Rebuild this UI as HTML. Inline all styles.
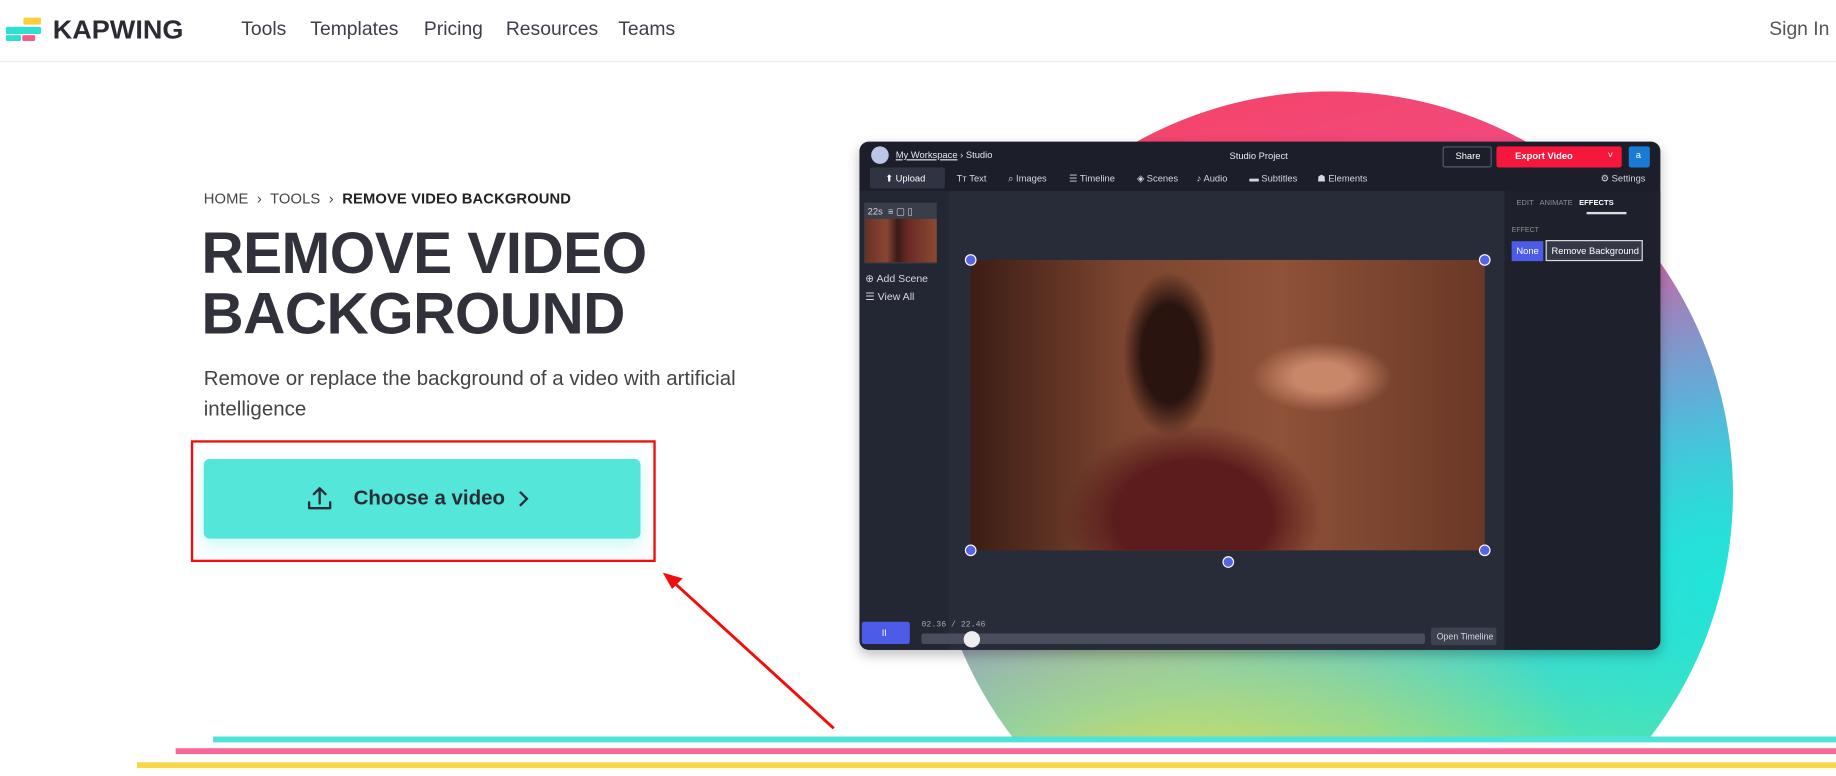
<!DOCTYPE html>
<html><head><meta charset="utf-8"><style>
*{margin:0;padding:0;box-sizing:border-box}
html,body{width:1836px;height:776px;overflow:hidden;background:#fff;font-family:"Liberation Sans",sans-serif}
#w{position:absolute;left:0;top:0;width:1568px;height:662px;overflow:hidden;transform:scale(1.17092);transform-origin:0 0}
.a{position:absolute}
.nav{font-size:16.5px;color:#3c3f48;top:16px}
.st{color:#d6d8de;font-size:8px;position:absolute;white-space:nowrap}
</style></head><body><div id="w">
<!-- header -->
<div class="a" style="left:20px;top:15px;width:15px;height:6px;background:#fdd03b;border-radius:1px"></div>
<div class="a" style="left:5px;top:23px;width:30px;height:6px;background:#2ee0d4;border-radius:1px"></div>
<div class="a" style="left:5px;top:30px;width:13px;height:5px;background:#2ee0d4;border-radius:1px"></div>
<div class="a" style="left:19px;top:30px;width:11px;height:5px;background:#fb5b8c;border-radius:1px"></div>
<div class="a" style="left:45px;top:13px;font-size:22px;font-weight:900;color:#2a2b33;transform:scaleX(1.05);transform-origin:0 0">KAPWING</div>
<div class="a nav" style="left:206px">Tools</div>
<div class="a nav" style="left:265px">Templates</div>
<div class="a nav" style="left:362px">Pricing</div>
<div class="a nav" style="left:432px">Resources</div>
<div class="a nav" style="left:528px">Teams</div>
<div class="a nav" style="left:1511px;color:#555">Sign In</div>
<div class="a" style="left:0;top:52px;width:1568px;height:1px;background:#eee"></div>
<!-- left -->
<div class="a" style="left:174px;top:163px;font-size:12.6px;color:#444;letter-spacing:0.1px">HOME &nbsp;›&nbsp; TOOLS &nbsp;›&nbsp; <b style="color:#222">REMOVE VIDEO BACKGROUND</b></div>
<div class="a" style="left:172px;top:190px;font-size:50px;font-weight:900;line-height:52px;color:#30313b;letter-spacing:-0.5px">REMOVE VIDEO<br>BACKGROUND</div>
<div class="a" style="left:174px;top:310px;font-size:17.5px;line-height:26px;color:#444;width:500px">Remove or replace the background of a video with artificial intelligence</div>
<div class="a" style="left:174px;top:392px;width:373px;height:68px;background:#55e6da;border-radius:5px;box-shadow:0 6px 14px rgba(85,230,218,.3)"></div>
<svg class="a" style="left:261px;top:414px" width="24" height="24" viewBox="0 0 24 24" fill="none" stroke="#2b2d36" stroke-width="2" stroke-linecap="round" stroke-linejoin="round"><path d="M3 15v5h18v-5M12 16V3M7 8l5-5 5 5"/></svg>
<div class="a" style="left:302px;top:415px;font-size:17.5px;font-weight:bold;color:#2b2d36">Choose a video</div>
<svg class="a" style="left:441px;top:419px" width="12" height="14" viewBox="0 0 12 14" fill="none" stroke="#2b2d36" stroke-width="2"><path d="M3 1l6 6-6 6"/></svg>
<div class="a" style="left:163px;top:376px;width:397px;height:104px;border:2.5px solid #f20c0c"></div>
<svg class="a" style="left:0;top:0" width="1568" height="662"><line x1="712" y1="622" x2="575" y2="497" stroke="#f20c0c" stroke-width="2.5"/><path d="M566 489l17 5-9 9z" fill="#f20c0c"/></svg>
<!-- circle -->
<div class="a" style="left:700px;top:60px;width:868px;height:573px;overflow:hidden">
<div class="a" style="left:94px;top:18px;width:686px;height:686px;border-radius:50%;background:
radial-gradient(circle at 30% 100%,#f3e04a 0%,rgba(243,224,74,0) 45%),
radial-gradient(circle at 98% 62%,#22e4d8 0%,rgba(34,228,216,0) 40%),
linear-gradient(165deg,#f7405f 0%,#ee4f8c 30%,#9c7bd8 50%,#40c6e6 65%,#6ee09a 80%,#f0df4e 100%)"></div></div>
<!-- lines -->
<div class="a" style="left:182px;top:629px;width:1386px;height:5px;background:#4ee3d8"></div>
<div class="a" style="left:150px;top:639px;width:1418px;height:5px;background:#f7679a"></div>
<div class="a" style="left:117px;top:651px;width:1451px;height:5px;background:#f8d648"></div>
<!-- studio -->
<div class="a" style="left:734px;top:121px;width:684px;height:434px;background:#1c1f2a;border-radius:8px;overflow:hidden;box-shadow:0 4px 10px rgba(0,0,0,.25)">
 <div class="a" style="left:76px;top:42px;width:475px;height:392px;background:#282b38"></div>
 <div class="a" style="left:0;top:42px;width:76px;height:392px;background:#232633"></div>
 <div class="a" style="left:551px;top:42px;width:133px;height:392px;background:#1e212c"></div>
 <div class="a" style="left:10px;top:4px;width:15px;height:15px;border-radius:50%;background:#b9c6e8"></div>
 <div class="st" style="left:31px;top:7px;color:#e8e8ee"><u>My Workspace</u> › Studio</div>
 <div class="st" style="left:316px;top:8px;color:#e8e8ee">Studio Project</div>
 <div class="a" style="left:498px;top:4px;width:42px;height:18px;border:1px solid #555b6a;border-radius:2px"></div><div class="st" style="left:509px;top:8px;color:#fff">Share</div>
 <div class="a" style="left:544px;top:4px;width:107px;height:18px;background:#f5173c;border-radius:2px"></div><div class="st" style="left:560px;top:8px;color:#fff;font-weight:bold">Export Video</div><div class="st" style="left:639px;top:7px;color:#fff">˅</div>
 <div class="a" style="left:657px;top:4px;width:18px;height:18px;background:#1b7ad6;border-radius:2px"></div><div class="st" style="left:663px;top:7px;color:#fff">a</div>
 <div class="a" style="left:9px;top:22px;width:64px;height:18px;background:#2f3342;border-radius:2px"></div>
 <div class="st" style="left:22px;top:27px;color:#fff">⬆ Upload</div>
 <div class="st" style="left:83px;top:27px">Tт Text</div>
 <div class="st" style="left:127px;top:27px">⌕ Images</div>
 <div class="st" style="left:179px;top:27px">☰ Timeline</div>
 <div class="st" style="left:237px;top:27px">◈ Scenes</div>
 <div class="st" style="left:288px;top:27px">♪ Audio</div>
 <div class="st" style="left:333px;top:27px">▬ Subtitles</div>
 <div class="st" style="left:391px;top:27px">☗ Elements</div>
 <div class="st" style="left:633px;top:27px">⚙ Settings</div>
 <div class="a" style="left:4px;top:52px;width:62px;height:52px;background:#3a3d4a"></div>
 <div class="st" style="left:7px;top:55px">22s &nbsp;≡ ▢ ▯</div>
 <div class="a" style="left:5px;top:66px;width:61px;height:37px;background:linear-gradient(90deg,#6a3024,#8a4532 30%,#3a1a18 45%,#6a2a26 60%,#8a4a30)"></div>
 <div class="st" style="left:5px;top:112px;font-size:9px">⊕ Add Scene</div>
 <div class="st" style="left:5px;top:127px;font-size:9px">☰ View All</div>
 <div class="a" style="left:95px;top:101px;width:439px;height:248px;background:
radial-gradient(ellipse 40px 70px at 170px 80px,#2a1410 60%,rgba(0,0,0,0) 100%),
radial-gradient(ellipse 110px 80px at 190px 220px,#5a1c1c 60%,rgba(0,0,0,0) 100%),
radial-gradient(ellipse 60px 30px at 300px 100px,#c9876a 40%,rgba(0,0,0,0) 100%),
linear-gradient(90deg,#3c1d15,#7c4530 30%,#8e5238 60%,#6a3826 100%)"></div>
 <div class="a" style="left:90px;top:96px;width:10px;height:10px;border-radius:50%;background:#5563e8;border:1.5px solid #fff"></div>
 <div class="a" style="left:529px;top:96px;width:10px;height:10px;border-radius:50%;background:#5563e8;border:1.5px solid #fff"></div>
 <div class="a" style="left:90px;top:344px;width:10px;height:10px;border-radius:50%;background:#5563e8;border:1.5px solid #fff"></div>
 <div class="a" style="left:529px;top:344px;width:10px;height:10px;border-radius:50%;background:#5563e8;border:1.5px solid #fff"></div>
 <div class="a" style="left:310px;top:354px;width:10px;height:10px;border-radius:50%;background:#5563e8;border:1.5px solid #fff"></div>
 <div class="st" style="left:561px;top:49px;font-size:6.5px;color:#8a8e9a">EDIT &nbsp; ANIMATE &nbsp; <b style="color:#fff">EFFECTS</b></div>
 <div class="a" style="left:621px;top:60px;width:34px;height:2px;background:#ddd"></div>
 <div class="st" style="left:557px;top:73px;font-size:6px;color:#8a8e9a">EFFECT</div>
 <div class="a" style="left:557px;top:85px;width:27px;height:17px;background:#4d5ce8"></div><div class="st" style="left:561px;top:89px;color:#fff">None</div>
 <div class="a" style="left:586px;top:84px;width:83px;height:18px;border:1.5px solid #ddd;background:#353947"></div><div class="st" style="left:591px;top:89px;color:#fff">Remove Background</div>
 <div class="a" style="left:2px;top:410px;width:41px;height:19px;background:#4d5ce8;border-radius:2px"></div><div class="st" style="left:19px;top:415px;color:#fff">II</div>
 <div class="st" style="left:53px;top:409px;font-family:'Liberation Mono',monospace;font-size:7px;color:#aaa">02.36 / 22.46</div>
 <div class="a" style="left:53px;top:420px;width:430px;height:9px;background:#4a4e5c;border-radius:2px"></div>
 <div class="a" style="left:89px;top:418px;width:14px;height:14px;background:#eee;border-radius:50%"></div>
 <div class="a" style="left:488px;top:415px;width:56px;height:15px;background:#3d4150;border-radius:2px"></div><div class="st" style="left:493px;top:418px;font-size:7.5px">Open Timeline</div>
</div>
</div></body></html>
